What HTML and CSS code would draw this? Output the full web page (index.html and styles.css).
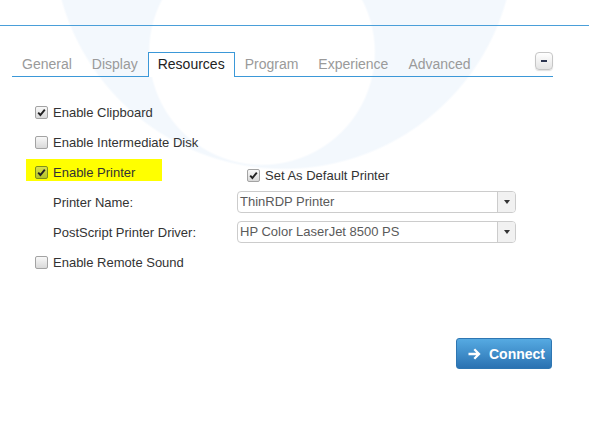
FILE: index.html
```html
<!DOCTYPE html>
<html>
<head>
<meta charset="utf-8">
<link rel="stylesheet" href="styles.css">
</head>
<body>
<div class="topbar"></div>
<div class="tabs">
  <div class="tab">General</div>
  <div class="tab">Display</div>
  <div class="tab active">Resources</div>
  <div class="tab">Program</div>
  <div class="tab">Experience</div>
  <div class="tab">Advanced</div>
  <button class="collapse" type="button"><span class="minus"></span></button>
</div>
<div class="form">
  <div class="cell wide">
    <span class="cb"><svg viewBox="0 0 11 11" width="11" height="11"><path d="M2.2 5.6 L4.4 8 L8.8 2.6" fill="none" stroke="#222" stroke-width="1.9"/></svg></span>Enable Clipboard
  </div>
  <div class="cell wide">
    <span class="cb"></span>Enable Intermediate Disk
  </div>
  <div class="cell">
    <div class="hl"><span class="cb hlcb"><svg viewBox="0 0 11 11" width="11" height="11"><path d="M2.2 5.6 L4.4 8 L8.8 2.6" fill="none" stroke="#222" stroke-width="1.9"/></svg></span>Enable Printer</div>
  </div>
  <div class="cell default">
    <span class="cb"><svg viewBox="0 0 11 11" width="11" height="11"><path d="M2.2 5.6 L4.4 8 L8.8 2.6" fill="none" stroke="#222" stroke-width="1.9"/></svg></span>Set As Default Printer
  </div>
  <div class="cell label">Printer Name:</div>
  <div class="cell">
    <div class="select"><span class="value">ThinRDP Printer</span><span class="arrow"><span class="tri"></span></span></div>
  </div>
  <div class="cell label">PostScript Printer Driver:</div>
  <div class="cell">
    <div class="select"><span class="value">HP Color LaserJet 8500 PS</span><span class="arrow"><span class="tri"></span></span></div>
  </div>
  <div class="cell wide">
    <span class="cb"></span>Enable Remote Sound
  </div>
</div>
<div class="actions">
  <button class="connect" type="button"><svg viewBox="0 0 13 12" width="13" height="12"><path d="M0.5 6 H11 M6.3 1.3 L11 6 L6.3 10.7" fill="none" stroke="#fff" stroke-width="2.3"/></svg>Connect</button>
</div>
</body>
</html>
```
FILE: styles.css
```css
html, body {
  margin: 0;
  padding: 0;
}
body {
  width: 589px;
  height: 444px;
  overflow: hidden;
  font-family: "Liberation Sans", Arial, sans-serif;
  color: #333;
  background:
    radial-gradient(circle 114px at 262px 52px, #fff 98%, rgba(255,255,255,0) 100%),
    radial-gradient(circle 232px at 284px -62px, #f3f8fd 99%, rgba(243,248,253,0) 100%),
    #fff;
}
.topbar {
  height: 25px;
  border-bottom: 1px solid #4a9fd9;
}
.tabs {
  display: flex;
  align-items: flex-end;
  margin: 26px 36px 0 12px;
  height: 24px;
  border-bottom: 1px solid #3b98d8;
}
.tab {
  font-size: 14px;
  line-height: 16px;
  padding: 3px 9px 5px;
  border: 1px solid transparent;
  border-bottom: 0;
  margin-bottom: -1px;
  color: #9a9a9a;
  white-space: nowrap;
}
.tab.active {
  color: #222;
  border-color: #3b98d8;
  background: #fff;
}
.collapse {
  margin-left: auto;
  align-self: flex-start;
  width: 18px;
  height: 18px;
  padding: 0;
  box-sizing: border-box;
  border: 1px solid #c6c6c6;
  border-radius: 4px;
  background: linear-gradient(#ffffff, #e4e4e4);
  box-shadow: 0 1px 1px rgba(0,0,0,0.12);
  display: flex;
  align-items: center;
  justify-content: center;
}
.minus {
  display: block;
  width: 6px;
  height: 1.5px;
  background: #2c3550;
}
.form {
  display: grid;
  grid-template-columns: 202px 279px;
  grid-auto-rows: 30px;
  padding: 20px 0 0 35px;
  font-size: 13px;
}
.cell {
  display: flex;
  align-items: center;
  white-space: nowrap;
}
.wide {
  grid-column: 1 / -1;
}
.cb {
  width: 13px;
  height: 13px;
  box-sizing: border-box;
  border: 1px solid #a3a3a3;
  border-radius: 2px;
  background: linear-gradient(#f8f8f8, #d9d9d9);
  margin-right: 5px;
  display: inline-flex;
  align-items: center;
  justify-content: center;
  flex: none;
}
.cb svg {
  display: block;
}
.hl {
  align-self: flex-start;
  margin: 2px 0 0 -9px;
  height: 22px;
  box-sizing: border-box;
  padding: 4px 27px 0 9px;
  background: #ffff00;
  display: flex;
  align-items: center;
}
.hlcb {
  border-color: #7f8f1a;
  background: linear-gradient(#d8df4a, #b4c22a);
}
.default {
  padding: 6px 0 0 10px;
}
.label {
  padding-left: 18px;
}
.select {
  width: 279px;
  height: 22px;
  box-sizing: border-box;
  border: 1px solid #cccccc;
  border-radius: 4px;
  display: flex;
  background: #fff;
  color: #5a5a5a;
}
.value {
  flex: 1;
  padding-left: 2px;
  line-height: 20px;
}
.arrow {
  width: 17px;
  border-left: 1px solid #cccccc;
  background: #f1f1f1;
  border-radius: 0 3px 3px 0;
  display: flex;
  align-items: center;
  justify-content: center;
}
.tri {
  width: 0;
  height: 0;
  border-left: 3.5px solid transparent;
  border-right: 3.5px solid transparent;
  border-top: 4px solid #333;
}
.actions {
  display: flex;
  justify-content: flex-end;
  padding-right: 37px;
  margin-top: 61px;
}
.connect {
  width: 96px;
  height: 31px;
  box-sizing: border-box;
  border: 1px solid #2e76b2;
  border-radius: 3px;
  background: linear-gradient(#56aae2, #2a72b2);
  color: #fff;
  font-family: "Liberation Sans", Arial, sans-serif;
  font-weight: bold;
  font-size: 14px;
  display: flex;
  align-items: center;
  gap: 8px;
  padding: 0 0 0 11px;
}
.connect svg {
  display: block;
}
```
